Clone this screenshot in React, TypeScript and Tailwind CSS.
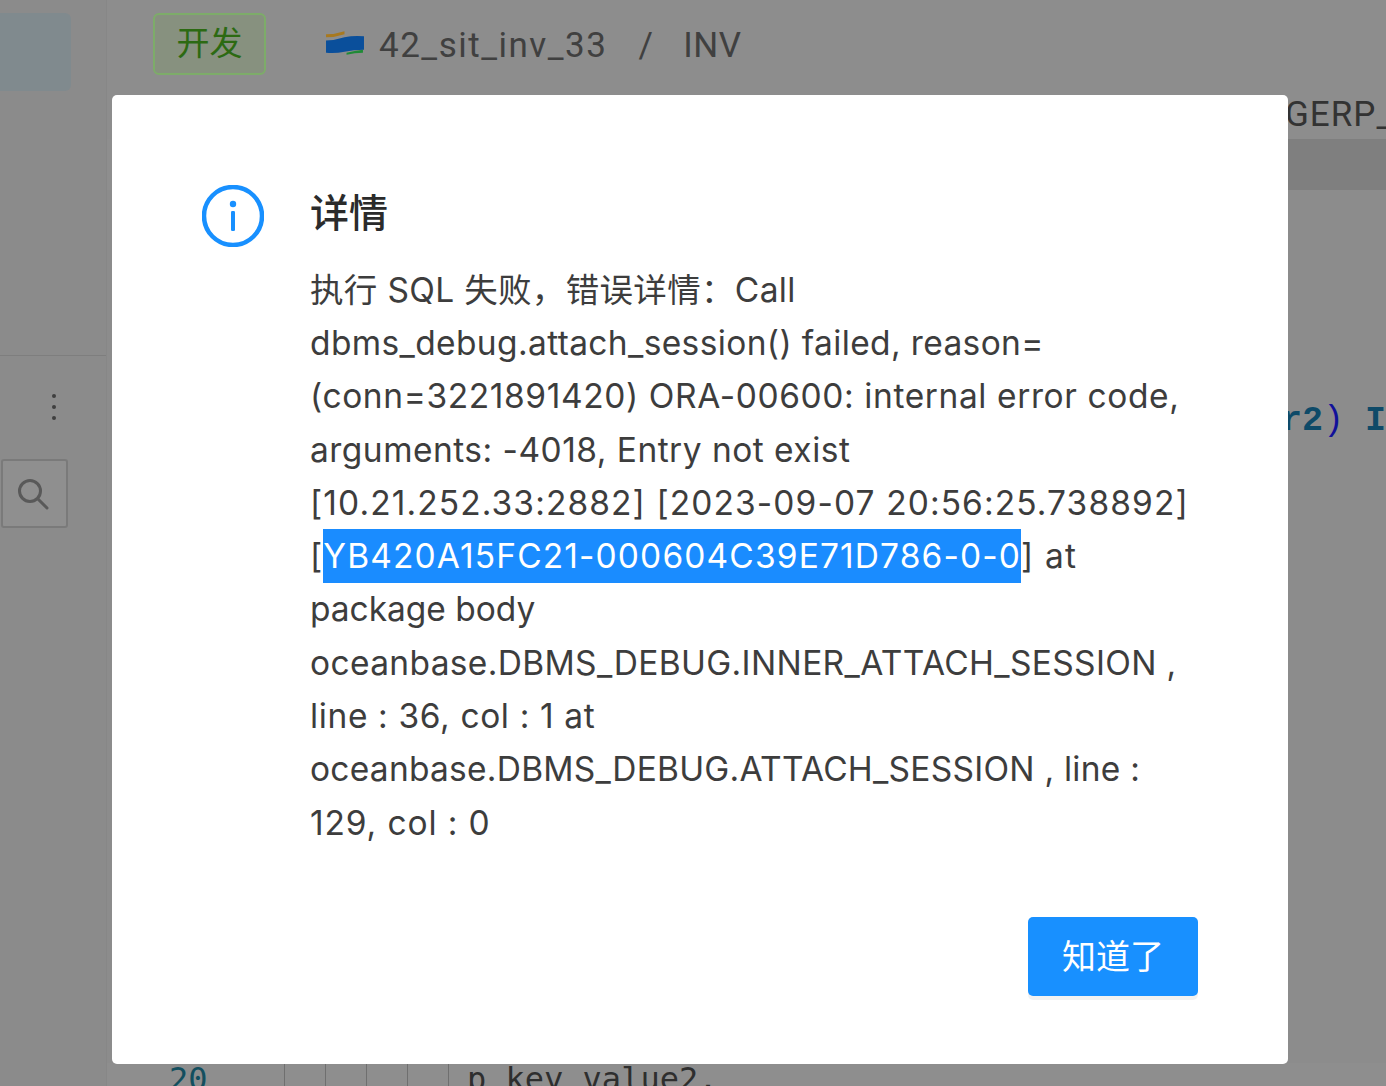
import React from "react";

const roboto = "font-['Roboto','Noto_Sans_CJK_SC',sans-serif]";
const inter = "font-['Inter','Noto_Sans_CJK_SC',sans-serif]";

function Background() {
  return (
    <div className={`flex h-[1086px] w-[1386px] overflow-hidden bg-[#8e8e8e] ${roboto}`}>
      <aside className="flex w-[107px] shrink-0 flex-col border-r border-[#878787] bg-[#8b8b8b]">
        <div className="mt-[13px] h-[78px] w-[71px] rounded-r-md bg-[#808a8e]" />
        <div className="mt-[264px] h-px w-full bg-[#7e7e7e]" />
        <div className="mr-[50px] mt-[38px] flex justify-end">
          <div className="flex flex-col gap-[7px]">
            <span className="h-[4px] w-[4px] rounded-full bg-[#3f3f3f]" />
            <span className="h-[4px] w-[4px] rounded-full bg-[#3f3f3f]" />
            <span className="h-[4px] w-[4px] rounded-full bg-[#3f3f3f]" />
          </div>
        </div>
        <div className="ml-[1px] mt-[39px] flex h-[69px] w-[67px] items-center justify-center rounded-[3px] border-2 border-[#7a7a7a] bg-[#8f8f8f]">
          <svg className="-ml-[3px]" width="34" height="34" viewBox="0 0 34 34" fill="none" stroke="#595959" strokeWidth="3" strokeLinecap="round">
            <circle cx="14" cy="14" r="10.5" />
            <path d="M22 22 L31 31" />
          </svg>
        </div>
      </aside>
      <main className="flex min-w-0 flex-1 flex-col">
        <div className="flex h-[89px] items-center bg-[#8d8d8d] pl-[46px] tracking-[1.5px] text-[#404040]">
          <div className="-mt-[2px] flex h-[62px] w-[113px] items-center justify-center rounded-[6px] border-2 border-[#7dac69] bg-[#87917f] text-[33px] tracking-normal text-[#2c6a12]">
            开发
          </div>
          <svg className="ml-[59px]" width="40" height="27" viewBox="0 0 39 26">
            <path d="M1 6 Q10 6 19 3 L19 0 Q10 3 1 3Z" fill="#a8791f" />
            <path d="M1 9 Q10 9 19 6 Q28 4 38 5 V18 Q28 18 19 20 Q10 22 1 21Z" fill="#0a4f9b" />
            <path d="M21 23 Q29 21 37 21 V18 Q29 19 21 21Z" fill="#1f8a36" />
          </svg>
          <span className="ml-[14px] mt-[3px] whitespace-nowrap text-[35px]">42_sit_inv_33</span>
          <span className="ml-[31px] mt-[3px] text-[35px]">/</span>
          <span className="ml-[29px] mt-[3px] text-[35px] tracking-[0.5px]">INV</span>
        </div>
        <div className="flex h-[50px] overflow-hidden bg-[#8d8d8d] pl-[1178px]">
          <span className="mt-[1px] whitespace-nowrap text-[35px] leading-[50px] tracking-[1px] text-[#333333]">GERP_</span>
        </div>
        <div className="ml-[20px] h-[51px] bg-[#7f7f7f]" />
        <div className="flex-1 bg-[#8c8c8c]">
          <div className="mt-[203px] flex justify-end overflow-hidden whitespace-nowrap font-['Liberation_Mono',monospace] text-[35px] font-bold leading-[56px] text-[#0e4a68]">
            r2<span className="font-normal text-[#11119a]">)</span>&nbsp;I
          </div>
        </div>
        <div className="flex h-[23px] items-start overflow-hidden font-['DejaVu_Sans_Mono',monospace] text-[32px] leading-[32px] text-[#2e2e2e]">
          <span className="ml-[62px] w-[115px] shrink-0 text-[#134f5f]">20</span>
          <span className="h-full w-[41px] shrink-0 border-l border-[#6f6f6f]" />
          <span className="h-full w-[41px] shrink-0 border-l border-[#6f6f6f]" />
          <span className="h-full w-[41px] shrink-0 border-l border-[#6f6f6f]" />
          <span className="h-full w-[41px] shrink-0 border-l border-[#6f6f6f]" />
          <span className="h-full shrink-0 whitespace-nowrap border-l border-[#6f6f6f] pl-[18px]">p_key_value2,</span>
        </div>
      </main>
    </div>
  );
}

function InfoIcon() {
  return (
    <svg width="62" height="62" viewBox="0 0 62 62" fill="none" className="shrink-0">
      <circle cx="31" cy="31" r="29" stroke="#1890ff" strokeWidth="4.5" />
      <circle cx="31" cy="19" r="3.2" fill="#1890ff" />
      <rect x="29" y="26" width="4" height="20" rx="1.2" fill="#1890ff" />
    </svg>
  );
}

function Modal() {
  const line = "whitespace-nowrap";
  return (
    <div className={`absolute left-[112px] top-[95px] h-[969px] w-[1176px] rounded-[5px] bg-white pl-[90px] pr-[90px] pt-[90px] ${inter}`}>
      <div className="flex gap-[46px]">
        <InfoIcon />
        <div className="min-w-0 flex-1">
          <h2 className="text-[39px] font-medium leading-[56px] text-[#2b2b2b]">详情</h2>
          <div className="mt-[22.7px] text-[33.5px] leading-[53.3px] text-[#3d3d3d]">
            <div className={`${line} tracking-[0.33px]`}>执行 SQL 失败，错误详情：Call</div>
            <div className={`${line} tracking-[0.37px]`}>dbms_debug.attach_session() failed, reason=</div>
            <div className={`${line} tracking-[0.6px]`}>(conn=3221891420) ORA-00600: internal error code,</div>
            <div className={`${line} tracking-[0.48px]`}>arguments: -4018, Entry not exist</div>
            <div className={`${line} tracking-[1.1px]`}>[10.21.252.33:2882] [2023-09-07 20:56:25.738892]</div>
            <div className={`${line} tracking-[1.13px]`}>
              [<span className="bg-[#1a8cff] py-[7px] text-white">YB420A15FC21-000604C39E71D786-0-0</span>] at
            </div>
            <div className={`${line} tracking-[-0.03px]`}>package body</div>
            <div className={`${line} tracking-[0.35px]`}>oceanbase.DBMS_DEBUG.INNER_ATTACH_SESSION ,</div>
            <div className={`${line} tracking-[0.63px]`}>line : 36, col : 1 at</div>
            <div className={`${line} tracking-[0.25px]`}>oceanbase.DBMS_DEBUG.ATTACH_SESSION , line :</div>
            <div className={`${line} tracking-[0.88px]`}>129, col : 0</div>
          </div>
        </div>
      </div>
      <div className="mt-[66.8px] flex justify-end">
        <button className="h-[79px] w-[170px] rounded-[5px] bg-[#1890ff] text-[34px] text-white shadow-[0_4px_0_rgba(0,0,0,0.05)]">
          知道了
        </button>
      </div>
    </div>
  );
}

export default function App() {
  return (
    <div className="relative h-[1086px] w-[1386px] overflow-hidden">
      <Background />
      <Modal />
    </div>
  );
}
